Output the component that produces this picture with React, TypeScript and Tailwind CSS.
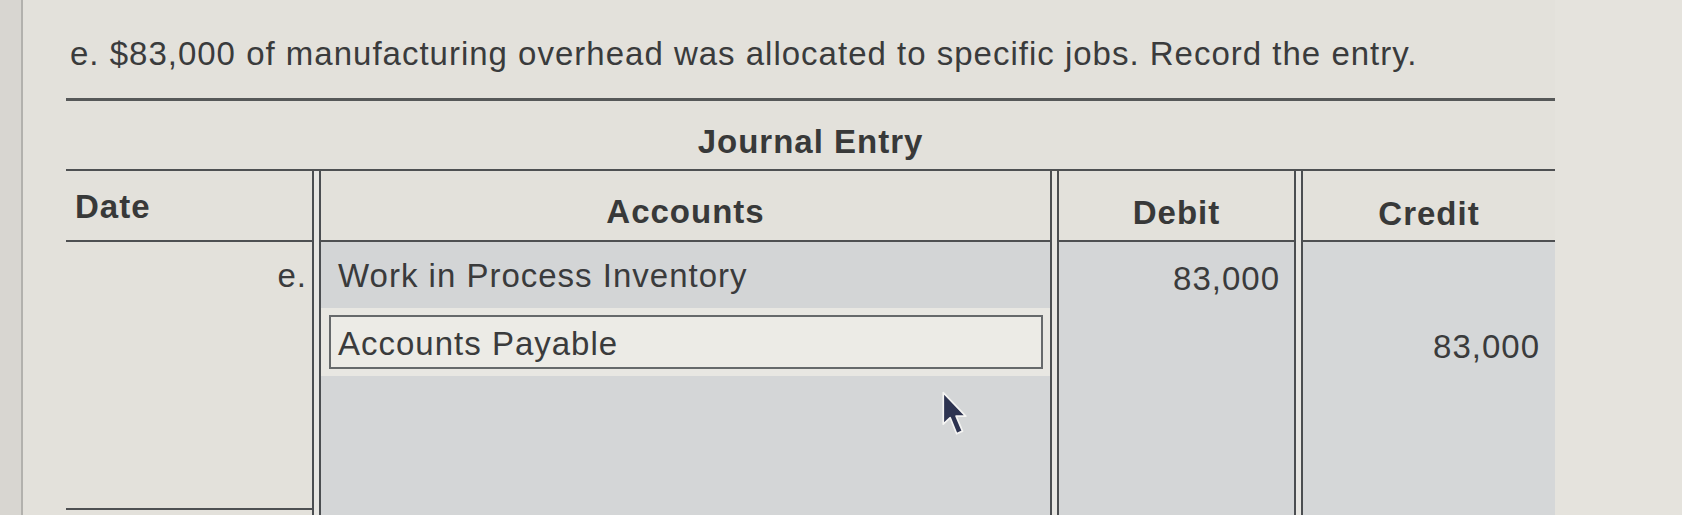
import React from "react";

function Sep() {
  return (
    <div className="flex h-full shrink-0">
      <div className="w-[2px] bg-[#4b4e51]" />
      <div className="w-[5px] bg-[#e7e6e2]" />
      <div className="w-[2px] bg-[#4b4e51]" />
    </div>
  );
}

function Cursor() {
  return (
    <svg
      className="absolute left-[941px] top-[391px]"
      width="27"
      height="46"
      viewBox="0 0 25 43"
    >
      <path
        d="M2 1.5 L2 31 L8.5 25 L14.5 40 L20 37.5 L14 23.5 L23 23.5 Z"
        fill="#2d3350"
        stroke="#f4f4f2"
        strokeWidth="1.6"
        strokeLinejoin="round"
      />
    </svg>
  );
}

export default function App() {
  return (
    <div className="relative flex h-[515px] w-[1682px] overflow-hidden bg-[#e3e1db] font-['Liberation_Sans',Arial,sans-serif] text-[#3a3b3c]">
      <div className="w-[21px] shrink-0 bg-[#d8d6d1]" />
      <div className="w-[2px] shrink-0 bg-[#b2b1ad]" />
      <div className="ml-[43px] flex w-[1489px] shrink-0 flex-col">
        <div className="mt-[37px] whitespace-nowrap pl-[4px] text-[33px] leading-[33px] tracking-[1px]">
          e. $83,000 of manufacturing overhead was allocated to specific jobs. Record the entry.
        </div>
        <div className="mt-[28px] h-[3px] bg-[#565858]" />
        <div className="mt-[24px] text-center text-[33px] font-bold leading-[33px] tracking-[1px] text-[#383939]">
          Journal Entry
        </div>
        <div className="mt-[11px] h-[2px] bg-[#4e5052]" />
        <div className="flex flex-1">
          {/* Date column */}
          <div className="flex w-[246px] shrink-0 flex-col">
            <div className="h-[69px] pl-[9px] pt-[19px] text-[33px] font-bold leading-[33px] tracking-[1px] text-[#383939]">
              Date
            </div>
            <div className="h-[2px] bg-[#4e5052]" />
            <div className="h-[266px] pr-[5px] pt-[17px] text-right text-[33px] leading-[33px] tracking-[1px]">
              e.
            </div>
            <div className="h-[2px] bg-[#4e5052]" />
          </div>
          <Sep />
          {/* Accounts column */}
          <div className="flex w-[729px] shrink-0 flex-col">
            <div className="h-[69px] pt-[24px] text-center text-[33px] font-bold leading-[33px] tracking-[1px] text-[#383939]">
              Accounts
            </div>
            <div className="h-[2px] bg-[#4e5052]" />
            <div className="h-[66px] bg-[#d3d5d6] pl-[17px] pt-[17px] text-[33px] leading-[33px] tracking-[1px]">
              Work in Process Inventory
            </div>
            <div className="h-[68px] bg-[#e8e7e2] pl-[8px] pr-[7px] pt-[7px]">
              <div className="h-[54px] border-2 border-[#66696b] bg-[#ecebe6] pl-[7px] pt-[10px] text-[33px] leading-[33px] tracking-[1px]">
                Accounts Payable
              </div>
            </div>
            <div className="flex-1 bg-[#d4d6d7]" />
          </div>
          <Sep />
          {/* Debit column */}
          <div className="flex w-[235px] shrink-0 flex-col">
            <div className="h-[69px] pt-[25px] text-center text-[33px] font-bold leading-[33px] tracking-[1px] text-[#383939]">
              Debit
            </div>
            <div className="h-[2px] bg-[#4e5052]" />
            <div className="flex-1 bg-[#d4d6d7] pr-[14px] pt-[20px] text-right text-[33px] leading-[33px] tracking-[1px]">
              83,000
            </div>
          </div>
          <Sep />
          {/* Credit column */}
          <div className="flex w-[252px] shrink-0 flex-col">
            <div className="h-[69px] pt-[26px] text-center text-[33px] font-bold leading-[33px] tracking-[1px] text-[#383939]">
              Credit
            </div>
            <div className="h-[2px] bg-[#4e5052]" />
            <div className="flex-1 bg-[#d5d7d8] pr-[15px] pt-[88px] text-right text-[33px] leading-[33px] tracking-[1px]">
              83,000
            </div>
          </div>
        </div>
      </div>
      <div className="flex-1 bg-[#e5e3dd]" />
      <Cursor />
    </div>
  );
}
